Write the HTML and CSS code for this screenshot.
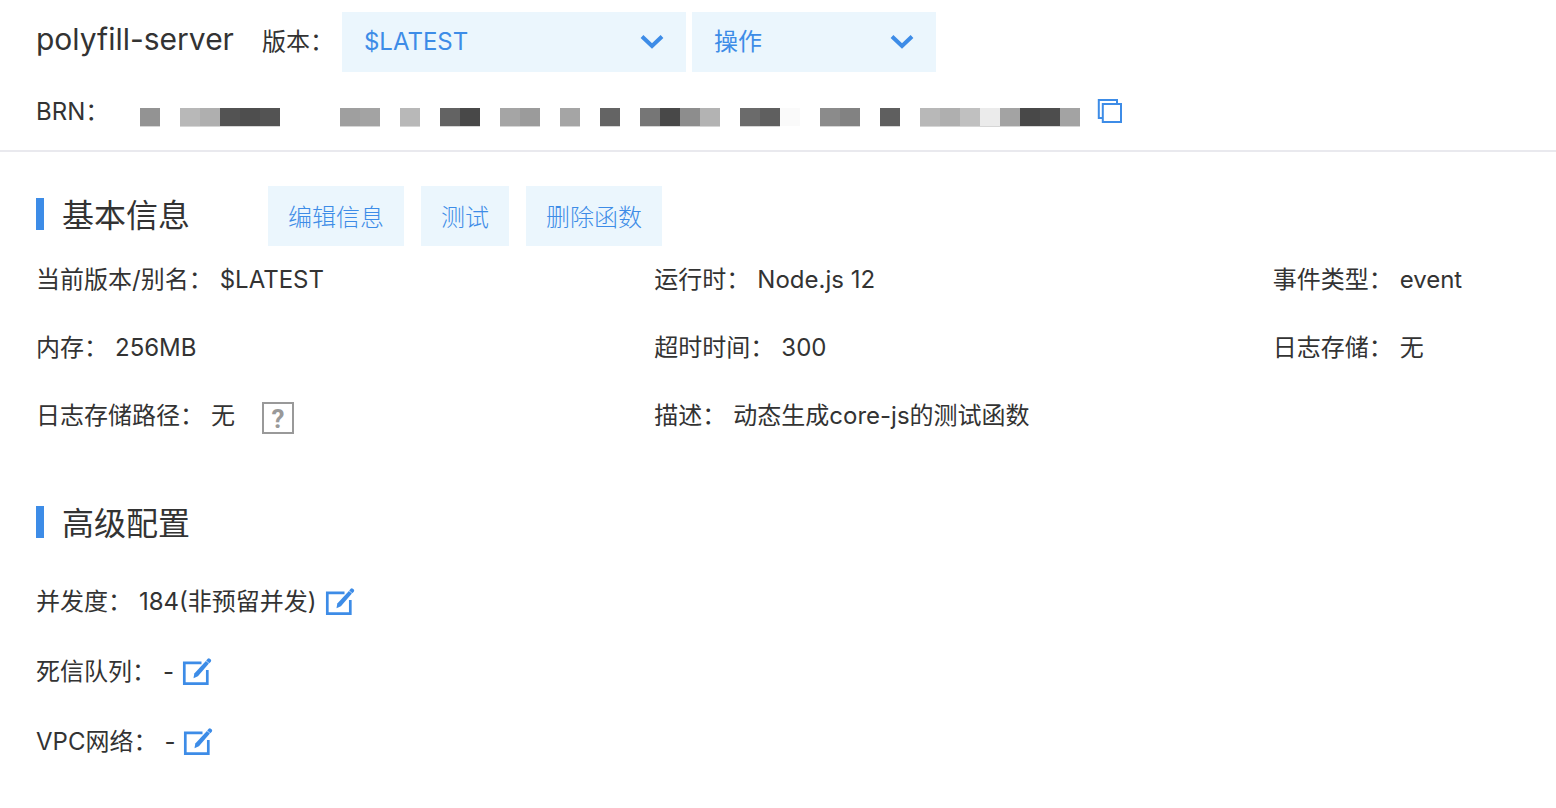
FILE: index.html
```html
<!DOCTYPE html>
<html lang="zh-CN">
<head>
<meta charset="utf-8">
<title>polyfill-server</title>
<meta name="viewport" content="width=device-width, initial-scale=1">
<link rel="stylesheet" href="styles.css">
</head>
<body>
<svg class="sprite" aria-hidden="true">
  <symbol id="icon-edit" viewBox="0 0 30 30">
    <path d="M19.500 5.800H2.300V26.700H25.300V13" fill="none" stroke="currentColor" stroke-width="2.700"/>
    <path d="M11.500 21.200L12.300 16.500L23.900 3.900L26.900 6.600L15.900 19.200Z" fill="currentColor"/>
    <path d="M24.200 3.500L25.700 1.800Q26.700 0.900 27.800 1.700L28.800 2.600Q29.600 3.600 28.800 4.700L27.300 6.300Z" fill="currentColor"/>
  </symbol>
  <symbol id="icon-chevron" viewBox="0 0 24 16">
    <path d="M2 2.500L12 12L22 2.500" fill="none" stroke="currentColor" stroke-width="4"/>
  </symbol>
</svg>

<header class="page-head">
  <div class="title-row">
    <h1 class="name">polyfill-server</h1>
    <label class="version-label" for="version">版本：</label>
    <div class="picks">
      <div class="pick pick-version">
        <select id="version" class="pick-control"><option>$LATEST</option></select>
        <svg class="chevron" aria-hidden="true"><use href="#icon-chevron"/></svg>
      </div>
      <div class="pick pick-action">
        <select class="pick-control" aria-label="操作"><option>操作</option></select>
        <svg class="chevron" aria-hidden="true"><use href="#icon-chevron"/></svg>
      </div>
    </div>
  </div>
  <div class="brn-row">
    <span class="brn-label">BRN：</span>
    <svg class="mosaic" viewBox="0 0 940 19" shape-rendering="crispEdges" aria-hidden="true">
      <path fill="#939393" d="M0 0h20v18H0z"/>
      <path fill="#b8b8b8" d="M40 0h20v18H40z"/>
      <path fill="#afafaf" d="M60 0h20v18H60z"/>
      <path fill="#535353" d="M80 0h20v18H80z"/>
      <path fill="#4e4e4e" d="M100 0h20v18h-20z"/>
      <path fill="#535353" d="M120 0h20v18h-20z"/>
      <path fill="#9f9f9f" d="M200 0h20v18h-20z"/>
      <path fill="#a3a3a3" d="M220 0h20v18h-20z"/>
      <path fill="#b8b8b8" d="M260 0h20v18h-20z"/>
      <path fill="#636363" d="M300 0h20v18h-20z"/>
      <path fill="#484848" d="M320 0h20v18h-20z"/>
      <path fill="#a5a5a5" d="M360 0h20v18h-20z"/>
      <path fill="#9b9b9b" d="M380 0h20v18h-20z"/>
      <path fill="#a5a5a5" d="M420 0h20v18h-20z"/>
      <path fill="#646464" d="M460 0h20v18h-20z"/>
      <path fill="#767676" d="M500 0h20v18h-20z"/>
      <path fill="#484848" d="M520 0h20v18h-20z"/>
      <path fill="#8d8d8d" d="M540 0h20v18h-20z"/>
      <path fill="#b3b3b3" d="M560 0h20v18h-20z"/>
      <path fill="#6b6b6b" d="M600 0h20v18h-20z"/>
      <path fill="#5f5f5f" d="M620 0h20v18h-20z"/>
      <path fill="#fafafa" d="M640 0h20v18h-20z"/>
      <path fill="#8b8b8b" d="M680 0h20v18h-20z"/>
      <path fill="#828282" d="M700 0h20v18h-20z"/>
      <path fill="#5f5f5f" d="M740 0h20v18h-20z"/>
      <path fill="#b8b8b8" d="M780 0h20v18h-20z"/>
      <path fill="#afafaf" d="M800 0h20v18h-20z"/>
      <path fill="#c0c0c0" d="M820 0h20v18h-20z"/>
      <path fill="#ebebeb" d="M840 0h20v18h-20z"/>
      <path fill="#a3a3a3" d="M860 0h20v18h-20z"/>
      <path fill="#484848" d="M880 0h20v18h-20z"/>
      <path fill="#4d4d4d" d="M900 0h20v18h-20z"/>
      <path fill="#a3a3a3" d="M920 0h20v18h-20z"/>
      <path fill="#d6d6d6" d="M0 18h20v1H0zM40 18h100v1H40zM200 18h40v1h-40zM260 18h20v1h-20zM300 18h40v1h-40zM360 18h40v1h-40zM420 18h20v1h-20zM460 18h20v1h-20zM500 18h80v1h-80zM600 18h40v1h-40zM680 18h40v1h-40zM740 18h20v1h-20zM780 18h160v1h-160z"/>
    </svg>
    <button class="icon-button copy" type="button" aria-label="复制">
      <svg class="copy-icon" viewBox="0 0 26 26" aria-hidden="true">
        <path d="M5 20H1.800V2H20V5" fill="none" stroke="currentColor" stroke-width="2"/>
        <path d="M5.800 6H24V24H5.800Z" fill="none" stroke="currentColor" stroke-width="2"/>
      </svg>
    </button>
  </div>
</header>

<main class="content">
  <section>
    <div class="section-head">
      <h2 class="section-title">基本信息</h2>
      <div class="actions">
        <button class="action" type="button">编辑信息</button>
        <button class="action" type="button">测试</button>
        <button class="action" type="button">删除函数</button>
      </div>
    </div>
    <dl class="facts">
      <div class="fact"><dt>当前版本/别名：</dt><dd>$LATEST</dd></div>
      <div class="fact"><dt>运行时：</dt><dd>Node.js 12</dd></div>
      <div class="fact"><dt>事件类型：</dt><dd>event</dd></div>
      <div class="fact"><dt>内存：</dt><dd>256MB</dd></div>
      <div class="fact"><dt>超时时间：</dt><dd>300</dd></div>
      <div class="fact"><dt>日志存储：</dt><dd>无</dd></div>
      <div class="fact"><dt>日志存储路径：</dt><dd>无</dd><dd class="help-cell"><button class="help" type="button">?</button></dd></div>
      <div class="fact"><dt>描述：</dt><dd>动态生成core-js的测试函数</dd></div>
    </dl>
  </section>

  <section class="advanced">
    <h2 class="section-title">高级配置</h2>
    <dl class="settings">
      <div class="fact"><dt>并发度：</dt><dd>184(非预留并发)</dd><dd class="edit-cell"><button class="icon-button" type="button" aria-label="编辑并发度"><svg class="edit-icon"><use href="#icon-edit"/></svg></button></dd></div>
      <div class="fact"><dt>死信队列：</dt><dd>-</dd><dd class="edit-cell"><button class="icon-button" type="button" aria-label="编辑死信队列"><svg class="edit-icon"><use href="#icon-edit"/></svg></button></dd></div>
      <div class="fact"><dt>VPC网络：</dt><dd>-</dd><dd class="edit-cell"><button class="icon-button" type="button" aria-label="编辑VPC网络"><svg class="edit-icon"><use href="#icon-edit"/></svg></button></dd></div>
    </dl>
  </section>
</main>
</body>
</html>
```
FILE: styles.css
```css
* {
  box-sizing: border-box;
}

body {
  margin: 0;
  background: #fff;
  color: #333;
  font: 24px/36px Inter, "Noto Sans CJK SC", sans-serif;
}

h1,
h2,
dl,
dd {
  margin: 0;
  font-weight: 400;
}

button,
select {
  margin: 0;
  border: 0;
  border-radius: 0;
  font: inherit;
  color: #3d8ce7;
  cursor: pointer;
}

.sprite {
  display: none;
}

.page-head {
  padding: 12px 36px 0;
  border-bottom: 2px solid #e9e9ee;
}

.title-row {
  display: flex;
  align-items: center;
  height: 60px;
}

.name {
  margin-right: 28px;
  padding-bottom: 6px;
  font-size: 30px;
  line-height: 40px;
}

.version-label {
  margin-right: 8px;
}

.picks {
  display: flex;
  gap: 6px;
}

.pick {
  position: relative;
  height: 60px;
}

.pick-version {
  width: 344px;
}

.pick-action {
  width: 244px;
}

.pick-control {
  width: 100%;
  height: 100%;
  padding: 0 60px 0 22px;
  appearance: none;
  background: #ebf6fd;
}

.chevron {
  position: absolute;
  top: 22px;
  right: 22px;
  width: 24px;
  height: 16px;
  color: #3d8ce7;
  pointer-events: none;
}

.brn-row {
  display: flex;
  align-items: center;
  height: 78px;
}

.brn-label {
  width: 104px;
  padding-top: 2px;
}

.mosaic {
  width: 940px;
  height: 19px;
  margin-top: 12px;
}

.icon-button {
  display: block;
  padding: 0;
  background: none;
}

.copy {
  margin-left: 17px;
}

.copy-icon {
  display: block;
  width: 26px;
  height: 26px;
}

.content {
  padding: 34px 36px;
}

.section-head {
  display: flex;
  gap: 78px;
}

.section-title {
  display: flex;
  align-items: center;
  gap: 18px;
  height: 60px;
  font-size: 32px;
  line-height: 48px;
}

.section-title::before {
  content: "";
  width: 8px;
  height: 32px;
  margin-bottom: 4px;
  background: #3d8ce7;
}

.actions {
  display: flex;
  gap: 17px;
}

.action {
  height: 60px;
  padding: 4px 20px 0;
  background: #ebf6fd;
  font-weight: 300;
}

.facts {
  display: grid;
  grid-template-columns: 5fr 5fr 2fr;
  grid-auto-rows: 68px;
}

.fact {
  display: flex;
  align-items: center;
  gap: 7px;
  white-space: nowrap;
}

.help-cell {
  padding: 4px 0 0 20px;
}

.help {
  display: block;
  width: 32px;
  height: 32px;
  padding: 0;
  border: 2px solid #999;
  background: #fff;
  color: #999;
  font: 700 26px/30px Roboto, sans-serif;
}

.advanced {
  margin-top: 44px;
}

.settings {
  display: grid;
  grid-auto-rows: 70px;
  margin-top: 13px;
}

.edit-cell {
  padding-left: 1px;
}

.edit-icon {
  display: block;
  width: 30px;
  height: 30px;
}
```
